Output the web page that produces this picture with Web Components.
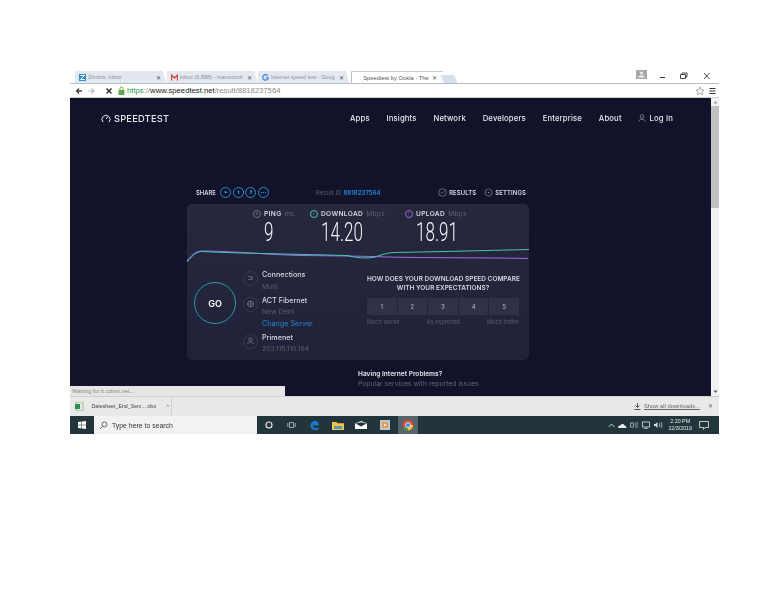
<!doctype html>
<html>
<head>
<meta charset="utf-8">
<title>Speedtest by Ookla</title>
<style>
  html, body { margin: 0; background: #fff; }
  body { padding: 70px 0 0 70px; height: 524px; box-sizing: border-box; overflow: hidden; font-family: "Inter", "Liberation Sans", sans-serif; }
</style>
</head>
<body>
<x-screen>
  <x-tabstrip>
    <x-tab><svg slot="icon" width="7" height="7"><rect width="7" height="7" fill="#2d8fd0"/><path d="M1.500 1.500h4l-4 4h4" fill="none" stroke="#fff"/></svg>Zimbra: Inbox</x-tab>
    <x-tab><svg slot="icon" width="7" height="7"><path d="M.5 6.500V1L3.500 4 6.500 1v5.500" fill="none" stroke="#d4453a" stroke-width="1.300"/></svg>Inbox (6,888) - mansoorol</x-tab>
    <x-tab><svg slot="icon" width="7" height="7" viewBox="0 0 14 14"><path d="M11.500 3.500A5.500 5.500 0 1 0 12.500 7.500H7.500" fill="none" stroke="#3b82e0" stroke-width="2.400"/></svg>internet speed test - Goog</x-tab>
    <x-tab active><span slot="icon" style="color:#6aa3d8">.</span>Speedtest by Ookla - The</x-tab>
  </x-tabstrip>
  <x-toolbar>https://www.speedtest.net/result/8818237564</x-toolbar>
  <x-content>
    <x-nav></x-nav>
    <x-share-row></x-share-row>
    <x-result-card>
      <x-stat label="PING" unit="ms" value="9" tint="#6c6f80" mark="s"></x-stat>
      <x-stat label="DOWNLOAD" unit="Mbps" value="14.20" tint="#44c4b8" mark="d"></x-stat>
      <x-stat label="UPLOAD" unit="Mbps" value="18.91" tint="#9b66d8" mark="u"></x-stat>
    </x-result-card>
    <x-help-note></x-help-note>
  </x-content>
  <x-download-bar></x-download-bar>
  <x-taskbar></x-taskbar>
</x-screen>
<script>
function define(name, css, html) {
  customElements.define(
    name,
    class extends HTMLElement {
      constructor() {
        super();
        const shadow = this.attachShadow({ mode: "open" });
        const body = typeof html === "function" ? html(this) : html;
        shadow.innerHTML = `<style>${css}</style>${body}`;
      }
    }
  );
}

define("x-screen", `
  :host { display: flex; flex-direction: column; width: 649px; height: 364px; filter: blur(.45px); }
`, `<slot></slot>`);

define("x-tabstrip", `
  :host { display: flex; align-items: flex-end; height: 14px; box-sizing: border-box; padding-left: 5px; border-bottom: 1px solid #b9bcc0; background: #fff; }
  .new { width: 17px; height: 8px; margin-left: -2px; background: #d6dfec; clip-path: polygon(0 0, 80% 0, 100% 100%, 20% 100%); }
  .win { margin-left: auto; display: flex; align-items: flex-start; align-self: flex-start; height: 12px; color: #333; }
  .user { width: 11px; height: 9px; background: #a9a9a9; display: flex; align-items: center; justify-content: center; }
  .win svg.b { margin-top: 2px; }
`, `<slot></slot><div class="new"></div>
  <div class="win">
    <div class="user"><svg width="7" height="7"><circle cx="3.500" cy="2" r="1.500" fill="#eee"/><path d="M.5 6.500c0-3 6-3 6 0z" fill="#eee"/></svg></div>
    <svg class="b" style="margin-left:11px" width="10" height="8"><path d="M2 5.500h5" stroke="#333"/></svg>
    <svg class="b" style="margin-left:11px" width="10" height="8"><path d="M1.500 2.500h5v4h-5zM3 2.500v-1.500h5v4h-1.500" fill="none" stroke="#333" stroke-width=".9"/></svg>
    <svg class="b" style="margin-left:13px;margin-right:7px" width="10" height="8"><path d="M2 1l5.500 6M7.500 1L2 7" stroke="#333" stroke-width=".9"/></svg>
  </div>`);

define("x-tab", `
  :host { display: flex; align-items: center; gap: 2px; width: 91.500px; height: 12px; box-sizing: border-box; padding: 0 6px 0 4px; background: #e2e7f0; color: #8d93a0; font: 5.500px "Liberation Sans", sans-serif; white-space: nowrap; clip-path: polygon(0 0, 96% 0, 100% 100%, 0 100%); }
  :host([active]) { background: #fff; color: #555; width: 92px; margin-left: 1px; clip-path: none; padding-left: 8px; font-size: 5.800px; border-left: 1px solid #b9bcc0; border-top: 1px solid #c8cacd; }
  .t { flex: 1; overflow: hidden; }
  .x { color: #555; font-size: 6px; }
  ::slotted(svg) { flex: none; }
`, `<slot name="icon"></slot><span class="t"><slot></slot></span><span class="x">✕</span>`);

define("x-toolbar", `
  :host { display: flex; align-items: center; height: 14px; background: #fff; color: #8a8a8a; font: 7.700px "Liberation Sans", sans-serif; padding-left: 5px; box-sizing: border-box; border-bottom: 1px solid #d0d0d0; }
  .go { flex: 1; margin-left: 2px; white-space: nowrap; }
  b { font-weight: 400; }
  .s { color: #2f9a45; } .d { color: #222; }
`, `
  <svg width="50" height="10"><path d="M7 5H1.500M4 2.500L1.500 5 4 7.500" fill="none" stroke="#444" stroke-width="1.300"/><path d="M18.500 5H13M16.500 2.500L19 5l-2.500 2.500" fill="none" stroke="#bcbcbc" stroke-width="1.200"/><path d="M31.500 2.500l5 5m0-5l-5 5" stroke="#333" stroke-width="1.500"/><rect x="43.500" y="4" width="6" height="5" fill="#65a74e"/><path d="M45 4V2.500a1.500 1.500 0 0 1 3 0V4" fill="none" stroke="#65a74e"/></svg>
  <span class="go"><b class="s">https:</b>//<b class="d">www.speedtest.net</b>/result/8818237564<span style="display:none"><slot></slot></span></span>
  <svg width="10" height="10"><path d="M5 1l1.200 2.700 2.800.3-2.100 1.900.6 2.900L5 7.400 2.500 8.800l.6-2.900L1 4l2.800-.3z" fill="none" stroke="#888" stroke-width=".7"/></svg>
  <svg style="margin:0 3px 0 4px" width="7" height="8"><path d="M.5 1.500h6M.5 4h6M.5 6.500h6" stroke="#333" stroke-width="1.200"/></svg>`);

define("x-content", `
  :host { display: block; height: 298px; background: #12132a; overflow: hidden; position: relative; padding-right: 8px; box-sizing: border-box; color: #fff; }
  .bar { position: absolute; right: 0; top: 0; bottom: 0; width: 8px; background: #f1f1f1; }
  .thumb { position: absolute; left: 0; right: 0; top: 8px; height: 102px; background: #c1c1c1; }
  .bar svg { position: absolute; left: 1.500px; }
  .status { position: absolute; left: 0; bottom: 0; width: 215px; height: 10px; background: #e6e6e6; color: #888; font: 5.800px/10px "Liberation Sans", sans-serif; padding-left: 2px; box-sizing: border-box; }
`, `<slot></slot>
  <div class="bar"><svg style="top:2px" width="5" height="4"><path d="M2.500 1L4.500 3.500h-4z" fill="#999"/></svg><div class="thumb"></div><svg style="bottom:2px" width="5" height="4"><path d="M2.500 3L4.500.5h-4z" fill="#555"/></svg></div>
  <div class="status">Waiting for b.cdnst.net...</div>`);

define("x-nav", `
  :host { display: flex; align-items: center; height: 16px; padding: 12px 38px 0 31px; font: 500 7.700px "Inter", sans-serif; letter-spacing: .15px; color: #e6e7ee; white-space: nowrap; }
  .logo { display: flex; align-items: center; gap: 3px; font: 500 9.300px "Inter", sans-serif; letter-spacing: .2px; width: 249px; }
  .links { display: flex; flex: 1; justify-content: space-between; }
  .in { display: flex; align-items: center; gap: 3px; }
`, `
  <div class="logo"><svg width="10" height="9"><path d="M2 8A4 4 0 1 1 8 8" fill="none" stroke="#fff" stroke-width=".9"/><path d="M5 5l2-2.500" stroke="#fff" stroke-width=".9"/></svg>SPEEDTEST</div>
  <div class="links"><span>Apps</span><span>Insights</span><span>Network</span><span>Developers</span><span>Enterprise</span><span>About</span>
  <span class="in"><svg width="8" height="8"><circle cx="4" cy="2.500" r="1.800" fill="none" stroke="#9b9fb2" stroke-width=".7"/><path d="M.8 7.500c.5-3 5.900-3 6.400 0" fill="none" stroke="#9b9fb2" stroke-width=".7"/></svg>Log In</span></div>`);

define("x-share-row", `
  :host { display: flex; align-items: center; height: 12px; margin: 60px 0 0 117px; width: 342px; box-sizing: border-box; padding: 0 3px 0 9px; font: 600 5.900px "Inter", sans-serif; color: #d8dae4; white-space: nowrap; }
  .i { width: 11px; height: 11px; border: 1px solid #1f8fd0; border-radius: 50%; margin-left: 1.500px; box-sizing: border-box; color: #35a6e8; font: 700 6px/9px "Liberation Sans", sans-serif; text-align: center; }
  .id { margin-left: 47px; color: #5d6075; font-weight: 400; letter-spacing: .12px; }
  .id b { color: #1d8fe0; font-weight: 600; }
  .r { display: flex; align-items: center; gap: 2px; letter-spacing: .15px; }
  .first { margin-left: auto; }
  .r + .r { margin-left: 8px; }
`, `SHARE<span style="width:3px"></span>
  <span class="i">⌁</span><span class="i">t</span><span class="i">f</span><span class="i">···</span>
  <span class="id">Result ID <b>8818237564</b></span>
  <span class="r first"><svg width="9" height="9"><circle cx="4.500" cy="4.500" r="3.800" fill="none" stroke="#8b8e9e" stroke-width=".7"/><path d="M3 4.500l1 1 2-2" fill="none" stroke="#8b8e9e" stroke-width=".7"/></svg>RESULTS</span>
  <span class="r"><svg width="9" height="9"><path d="M4.500.7l3.300 1.900v3.800L4.500 8.300 1.200 6.400V2.600z" fill="none" stroke="#8b8e9e" stroke-width=".7"/><circle cx="4.500" cy="4.500" r=".8" fill="#8b8e9e"/></svg>SETTINGS</span>`);

define("x-result-card", `
  :host { display: block; width: 342px; height: 156px; margin: 6px 0 0 117px; background: linear-gradient(180deg, #26283c, #20223a); border-radius: 5px; color: #fff; }
  .stats { display: grid; grid-template-columns: 57px 95px 80px; padding: 5px 0 0 66px; }
  svg.g { display: block; margin-top: 3px; }
  .lower { display: flex; }
  .go { flex: none; width: 42px; height: 42px; margin: 17px 0 0 7px; box-sizing: border-box; border: 1px solid #2a9aa6; border-radius: 50%; display: flex; align-items: center; justify-content: center; font: 600 9px "Inter", sans-serif; }
  .isp { margin: 4px 0 0 7px; width: 124px; }
  .q { width: 152px; margin: 10px 0 0 0; }
`, `
  <div class="stats"><slot></slot></div>
  <svg class="g" width="342" height="18" viewBox="0 0 342 18">
    <path d="M0 14C6 6 11 4 15 4c30 0 70 4 100 4.500 35 .5 60 .5 85 1.500 40 1 100 .5 141 1.500" fill="none" stroke="#9b6ee0" stroke-width="1"/>
    <path d="M0 15C6 7 11 4.500 15 4.500 40 6 100 7 160 8.500 170 11 178 11.500 186 10.500 192 9 198 6 206 5.500 240 5 300 3.500 342 2.500" fill="none" stroke="#4cc3bd" stroke-width="1"/>
  </svg>
  <div class="lower">
    <div class="go">GO</div>
    <div class="isp">
      <x-isp-row icon="link" name="Connections" sub="Multi"></x-isp-row>
      <x-isp-row icon="globe" name="ACT Fibernet" sub="New Delhi" link="Change Server"></x-isp-row>
      <x-isp-row icon="user" name="Primenet" sub="203.115.110.194"></x-isp-row>
    </div>
    <x-survey class="q"></x-survey>
  </div>`);

define("x-stat", `
  :host { display: block; font: 600 6.600px "Inter", sans-serif; letter-spacing: .35px; color: #d9dbe4; white-space: nowrap; }
  .l { display: flex; align-items: center; gap: 3px; height: 9px; }
  .u { color: #5e6176; font-weight: 400; }
  .dot { width: 8px; height: 8px; border-radius: 50%; box-sizing: border-box; border: 1px solid var(--tint); display: flex; align-items: center; justify-content: center; color: var(--tint); font: 700 5px/1 "Liberation Sans", sans-serif; }
  .v { display: block; margin: 2px 0 0 11px; font: 300 26px/24px "Roboto", sans-serif; letter-spacing: 0; color: #f2f3f7; transform: scaleX(.655); transform-origin: 0 0; }
`, (el) => {
  const glyph = { s: "s", d: "↓", u: "↑" }[el.getAttribute("mark")];
  return `<div class="l" style="--tint:${el.getAttribute("tint")}"><span class="dot">${glyph}</span>${el.getAttribute("label")} <span class="u">${el.getAttribute("unit")}</span></div>
  <span class="v">${el.getAttribute("value")}</span>`;
});

const ispIcons = {
  link: `<path d="M5 5.500h4v3H5M7.500 7h3" fill="none" stroke="#6d7083" stroke-width=".7"/>`,
  globe: `<circle cx="7.500" cy="7" r="3" fill="none" stroke="#85889a" stroke-width=".7"/><path d="M4.500 7h6M7.500 4v6" stroke="#85889a" stroke-width=".6"/>`,
  user: `<circle cx="7.500" cy="5.500" r="1.700" fill="none" stroke="#85889a" stroke-width=".7"/><path d="M4.500 10c.5-2.500 5.500-2.500 6 0" fill="none" stroke="#85889a" stroke-width=".7"/>`,
};
define("x-isp-row", `
  :host { display: grid; grid-template-columns: 15px 1fr; column-gap: 4px; font: 500 7.200px/11.500px "Inter", sans-serif; color: #d5d7e2; margin-bottom: 2.500px; white-space: nowrap; }
  svg { margin-top: 2px; }
  .s { color: #5a5d72; font-weight: 400; font-size: 6.800px; }
  .c { color: #2387cf; font-weight: 400; }
`, (el) => {
  const link = el.getAttribute("link");
  return `<svg width="15" height="15"><circle cx="7.500" cy="7.500" r="7" fill="none" stroke="#3c3f54" stroke-width=".8"/>${ispIcons[el.getAttribute("icon")]}</svg>
  <div>${el.getAttribute("name")}<div class="s">${el.getAttribute("sub")}</div>${link ? `<div class="c">${link}</div>` : ""}</div>`;
});

define("x-survey", `
  :host { display: block; text-align: center; font: 600 6.500px/9px "Inter", sans-serif; color: #d7d9e3; white-space: nowrap; }
  .btns { display: grid; grid-template-columns: repeat(5, 1fr); gap: 1px; margin-top: 5px; height: 17px; }
  .btns span { background: #2f3146; color: #a9abbb; font: 500 6px/17px "Inter", sans-serif; }
  .lab { display: flex; justify-content: space-between; margin-top: 3px; font: 400 5.600px/9px "Inter", sans-serif; color: #5a5d72; }
`, `HOW DOES YOUR DOWNLOAD SPEED COMPARE<br>WITH YOUR EXPECTATIONS?
  <div class="btns"><span>1</span><span>2</span><span>3</span><span>4</span><span>5</span></div>
  <div class="lab"><span>Much worse</span><span>As expected</span><span>Much better</span></div>`);

define("x-help-note", `
  :host { display: block; margin: 9px 0 0 288px; font: 600 6.600px/10px "Inter", sans-serif; color: #dfe1ea; white-space: nowrap; }
  div { color: #62657a; font-weight: 400; font-size: 6.800px; }
`, `Having Internet Problems?<div>Popular services with reported issues</div>`);

define("x-download-bar", `
  :host { display: flex; align-items: flex-start; height: 20px; background: #e9e9e9; border-top: 1px solid #cfcfcf; box-sizing: border-box; font: 5.800px "Liberation Sans", sans-serif; color: #444; white-space: nowrap; }
  .item { display: flex; align-items: center; height: 18px; width: 100px; margin-left: 2px; border-right: 1px solid #d0d0d0; box-sizing: border-box; padding-left: 3px; gap: 8px; font-size: 5.250px; }
  .caret { margin-left: auto; width: 7px; text-align: center; color: #777; font-size: 5px; }
  .all { margin-left: auto; display: flex; align-items: center; gap: 3px; height: 18px; text-decoration: underline; color: #666; }
  .x { margin: 0 6px 0 8px; height: 18px; line-height: 18px; color: #666; }
`, `<div class="item"><svg width="9" height="9"><rect x="1" y="0" width="7" height="9" fill="#dfe9de" stroke="#7aa27a" stroke-width=".6"/><rect x="0" y="2" width="5" height="5" fill="#2f8f4e"/></svg>Datesheet_End_Sem....xlsx<span class="caret">˄</span></div>
  <div class="all"><svg width="7" height="7"><path d="M3.500 0v4M1.500 2.500l2 2 2-2M.5 6.500h6" fill="none" stroke="#555"/></svg>Show all downloads...</div><span class="x">✕</span>`);

define("x-taskbar", `
  :host { display: flex; align-items: center; height: 18px; background: #22353a; color: #e8eef0; font: 6.200px "Liberation Sans", sans-serif; white-space: nowrap; }
  .start { width: 24px; display: flex; justify-content: center; }
  .search { display: flex; align-items: center; gap: 4px; width: 163px; height: 18px; padding-left: 5px; box-sizing: border-box; background: #f2f2f2; color: #333; font-size: 6.900px; }
  .apps { display: flex; align-items: center; height: 18px; }
  .apps > div { width: 23.200px; height: 18px; display: flex; align-items: center; justify-content: center; }
  .apps > .on { background: #55666a; width: 20px; margin-left: 2px; }
  .tray { margin-left: auto; display: flex; align-items: center; gap: 3px; }
  .clock { text-align: center; font-size: 5.300px; line-height: 7px; margin: 0 4px 0 2px; }
`, `
  <div class="start"><svg width="8" height="8"><path d="M0 1l3.500-.5V3.700H0zM4 .4L8 0v3.700H4zM0 4.200h3.500v3.300L0 7zM4 4.200h4V8l-4-.5z" fill="#fff"/></svg></div>
  <div class="search"><svg width="9" height="9"><circle cx="5.500" cy="3.500" r="2.500" fill="none" stroke="#444" stroke-width=".8"/><path d="M3.700 5.300L1 8" stroke="#444" stroke-width=".8"/></svg>Type here to search</div>
  <div class="apps">
    <div><svg width="8" height="8"><circle cx="4" cy="4" r="3" fill="none" stroke="#eee" stroke-width="1.100"/></svg></div>
    <div><svg width="9" height="8"><path d="M2.500 1.500h4v5h-4zM.8 2v4M8.200 2v4" fill="none" stroke="#bbc5c8" stroke-width=".8"/></svg></div>
    <div><svg width="11" height="11"><path d="M1.500 6C1.500 2.500 4 1 6 1c2.700 0 4 2 4 4.500H3.800c.2 3 3.700 3.200 5.700 1.700v2.300C6 11 1.500 9.800 1.500 6z" fill="#1878d0"/></svg></div>
    <div><svg width="12" height="9"><path d="M0 1h4.500l1 1.200H12V9H0z" fill="#f0c64c"/><rect x="2" y="5" width="8" height="3" fill="#5a9ab0"/></svg></div>
    <div><svg width="12" height="8"><path d="M0 2.500L6 0l6 2.500V8H0z" fill="#fff"/><path d="M.5 2.500L6 5.500l5.500-3L6 1.200z" fill="#22353a"/></svg></div>
    <div><svg width="10" height="10"><rect width="10" height="10" fill="#b9c9d4"/><rect x="2" y="2" width="6" height="6" fill="#e89a4a"/><path d="M4 3.500L6.500 5 4 6.500z" fill="#fff"/></svg></div>
    <div class="on"><svg width="12" height="12" viewBox="0 0 12 12"><circle cx="6" cy="6" r="5.500" fill="#d9473c"/><path d="M6 6L1.200 8.800A5.500 5.500 0 0 0 6 11.500L8.900 6z" fill="#4aa458"/><path d="M6 6h5.200A5.500 5.500 0 0 1 6 11.500z" fill="#f1c232"/><circle cx="6" cy="6" r="2.500" fill="#4285d6" stroke="#fff" stroke-width=".8"/></svg></div>
  </div>
  <div class="tray">
    <svg style="margin-right:-1px" width="7" height="6"><path d="M.7 5l2.800-3 2.800 3" fill="none" stroke="#eee" stroke-width=".8"/></svg>
    <svg width="10" height="6"><path d="M1 6c0-2 1.500-2.500 2.500-2.500C4 1.500 7 1.500 7.500 3.500 9 3.500 9.500 5 9.500 6z" fill="#eee"/></svg>
    <svg style="margin-right:-1px" width="9" height="6"><rect x=".5" y="1" width="3" height="4" fill="none" stroke="#ccd" stroke-width=".7"/><path d="M5 1h3M5 3h3M5 5h3" stroke="#ccd" stroke-width=".7"/></svg>
    <svg width="10" height="8"><rect x="1.500" y="1" width="7" height="5" fill="none" stroke="#dde" stroke-width=".8"/><path d="M5 6v2M3 7.700h4" stroke="#dde" stroke-width=".7"/></svg>
    <svg width="9" height="8"><path d="M0 3h1.500L3.500 1v6L1.500 5H0z" fill="#dde"/><path d="M5 2c1 1 1 3 0 4M6.800 1c1.500 1.500 1.500 4.500 0 6" fill="none" stroke="#dde" stroke-width=".7"/></svg>
    <div class="clock">2:20 PM<br>12/3/2019</div>
    <svg style="margin-right:10px" width="10" height="9"><path d="M.5.5h9v6H6L4.500 8.500V6.500h-4z" fill="none" stroke="#eee" stroke-width=".8"/></svg>
  </div>`);
</script>
</body>
</html>
